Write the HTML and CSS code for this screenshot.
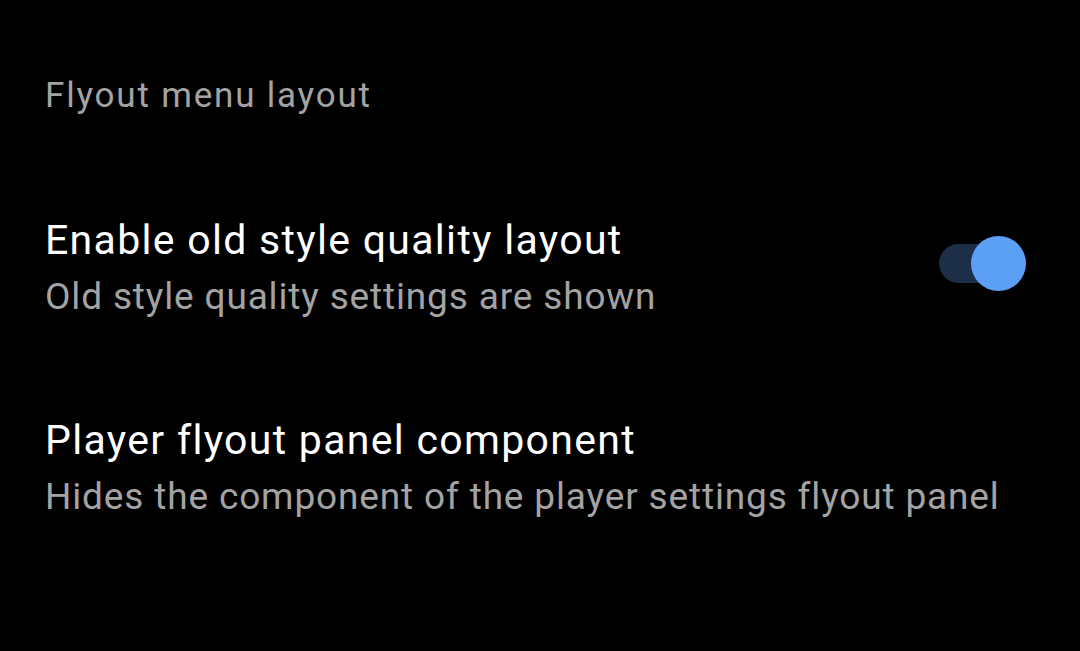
FILE: index.html
```html
<!DOCTYPE html>
<html lang="en">
<head>
    <meta charset="UTF-8">
    <meta name="viewport" content="width=device-width, initial-scale=1.0">
    <title>Flyout menu settings</title>
    <link rel="stylesheet" href="styles.css">
</head>
<body>
    <div class="screen">
        <div class="category">Flyout menu layout</div>

        <div class="pref">
            <div class="pref-text">
                <div class="pref-title">Enable old style quality layout</div>
                <div class="pref-summary">Old style quality settings are shown</div>
            </div>
            <div class="switch on">
                <div class="switch-track"></div>
                <div class="switch-thumb"></div>
            </div>
        </div>

        <div class="pref">
            <div class="pref-text">
                <div class="pref-title">Player flyout panel component</div>
                <div class="pref-summary">Hides the component of the player settings flyout panel</div>
            </div>
        </div>
    </div>
</body>
</html>
```

FILE: styles.css
```css
:root {
    --bg-color: #000000;
    --title-color: #ffffff;
    --summary-color: #a3a3a3;
    --accent-color: #5ba0f4;
    --track-color: #1c2e48;
}

* {
    margin: 0;
    padding: 0;
    box-sizing: border-box;
}

html, body {
    height: 100%;
}

body {
    font-family: Roboto, "Noto Sans", sans-serif;
    background-color: var(--bg-color);
    color: var(--title-color);
    overflow: hidden;
}

.screen {
    padding: 73px 54px 0 45px;
}

.category {
    font-size: 35px;
    line-height: 46px;
    letter-spacing: 1.8px;
    color: var(--summary-color);
    margin-bottom: 95px;
}

.pref {
    display: flex;
    align-items: flex-start;
    height: 200px;
}

.pref-text {
    flex: 1;
}

.pref-title {
    font-size: 41px;
    line-height: 52px;
    letter-spacing: 1.3px;
    color: var(--title-color);
}

.pref-summary {
    margin-top: 6px;
    font-size: 37px;
    line-height: 50px;
    letter-spacing: 0.85px;
    color: var(--summary-color);
}

/* material switch, thumb overhangs the track */
.switch {
    position: relative;
    width: 87px;
    height: 55px;
    margin-top: 22px;
}

.switch-track {
    position: absolute;
    left: 0;
    top: 8px;
    width: 70px;
    height: 39px;
    border-radius: 20px;
    background-color: var(--track-color);
}

.switch-thumb {
    position: absolute;
    right: 0;
    top: 0;
    width: 55px;
    height: 55px;
    border-radius: 50%;
    background-color: var(--accent-color);
}
```
